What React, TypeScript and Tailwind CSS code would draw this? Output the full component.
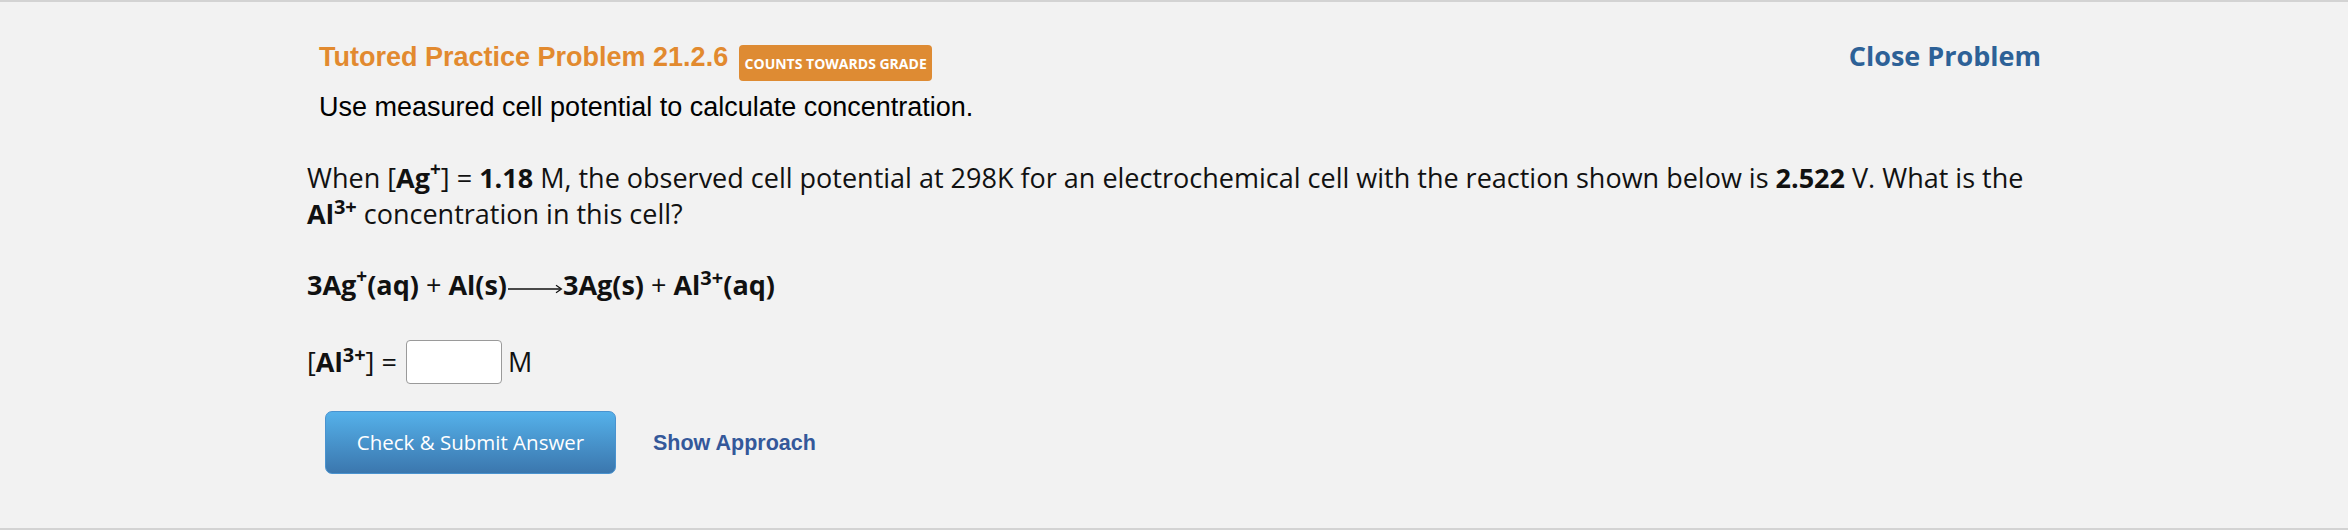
import React from "react";

function Arrow() {
  return (
    <svg width="56" height="12" viewBox="0 0 56 12" className="inline-block align-baseline" style={{ verticalAlign: "0px" }}>
      <line x1="1" y1="6" x2="54" y2="6" stroke="#111" strokeWidth="1.3" />
      <path d="M49 2.2 L54.5 6 L49 9.8" fill="none" stroke="#111" strokeWidth="1.2" />
    </svg>
  );
}

export default function App() {
  return (
    <div className="w-full h-[530px] box-border bg-[#f2f2f2] border-y-2 border-[#d3d3d3]">
      <div className="w-[1734px] mx-auto">
        <div className="flex items-start justify-between pl-3 pt-[39px]">
          <div className="flex items-start">
            <h1 className="mt-[3px] text-[27px] leading-[27px] font-bold text-[#e28a2f] font-['Liberation_Sans',Arial,sans-serif]">
              Tutored Practice Problem 21.2.6
            </h1>
            <span className="ml-[11px] mt-[4px] h-[36px] w-[193px] rounded-[4px] bg-[#de8b33] text-white text-[14px] font-bold font-['Open_Sans',sans-serif] flex items-center justify-center">
              COUNTS TOWARDS GRADE
            </span>
          </div>
          <a className="mt-[1px] text-[27px] leading-[27px] font-bold text-[#2d6197] font-['Open_Sans',sans-serif] cursor-pointer">
            Close Problem
          </a>
        </div>

        <p className="pl-3 mt-[13px] text-[27px] leading-[27px] text-black font-['Liberation_Sans',Arial,sans-serif]">
          Use measured cell potential to calculate concentration.
        </p>

        <div className="font-['Open_Sans',sans-serif] text-[27px] leading-[36px] text-[#111]">
          <p className="mt-[39px]">
            When [<b>Ag<sup className="text-[19px] -top-[0.62em]">+</sup></b>] = <b>1.18</b> M, the observed cell potential at 298K for an electrochemical cell with the reaction shown below is <b>2.522</b> V. What is the <b>Al<sup className="text-[20px]">3+</sup></b> concentration in this cell?
          </p>

          <p className="mt-[35px]">
            <b>3Ag<sup className="text-[19px] -top-[0.62em]">+</sup>(aq)</b> + <b>Al(s)</b>
            <Arrow />
            <b>3Ag(s)</b> + <b>Al<sup className="text-[20px]">3+</sup>(aq)</b>
          </p>

          <div className="mt-[37px] flex items-center">
            <span>
              [<b>Al<sup className="text-[20px]">3+</sup></b>] =
            </span>
            <input
              type="text"
              className="ml-[9px] w-[96px] h-[44px] box-border border border-[#9a9a9a] rounded-[4px] bg-white outline-none"
            />
            <span className="ml-[6px]">M</span>
          </div>
        </div>

        <div className="mt-[27px] pl-[18px] flex items-center">
          <button className="w-[291px] h-[63px] rounded-[7px] bg-gradient-to-b from-[#55b1ea] to-[#3b77ae] text-white text-[20.5px] font-['Open_Sans',sans-serif] border border-[#4a93cf]">
            Check &amp; Submit Answer
          </button>
          <a className="ml-[37px] mt-[2px] text-[21.5px] font-bold text-[#34589a] font-['Liberation_Sans',Arial,sans-serif] cursor-pointer">
            Show Approach
          </a>
        </div>
      </div>
    </div>
  );
}
